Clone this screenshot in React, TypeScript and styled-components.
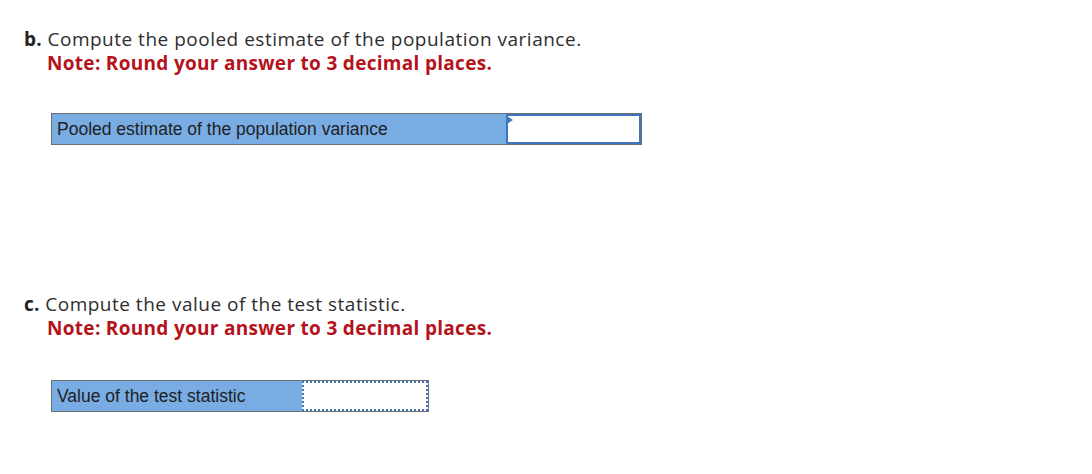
import styled, { createGlobalStyle } from "styled-components";

const GlobalStyle = createGlobalStyle`
  body {
    margin: 0;
    background: #ffffff;
    font-family: "Open Sans", Lato, sans-serif;
  }
`;

const Page = styled.main`
  padding: 27px 24px 0 24px;
`;

const Part = styled.section<{ $gap: number }>`
  margin-bottom: ${({ $gap }) => $gap}px;
`;

const Prompt = styled.p`
  margin: 0;
  font-size: 19px;
  line-height: 24px;
  letter-spacing: 0.5px;
  color: #2e2e2e;

  b {
    font-weight: 700;
    letter-spacing: 0.3px;
    color: #222;
  }
`;

const Note = styled.p`
  margin: 0 0 0 23px;
  font-size: 19px;
  line-height: 24px;
  letter-spacing: 0.3px;
  font-weight: 700;
  color: #b5121b;
`;

const AnswerTable = styled.div<{ $label: number; $input: number; $top: number }>`
  display: grid;
  grid-template-columns: ${({ $label }) => $label}px ${({ $input }) => $input}px;
  width: max-content;
  margin: ${({ $top }) => $top}px 0 0 27px;
  border: 1px solid #6f6f6f;
  font-family: "Liberation Sans", Arial, sans-serif;
`;

const LabelCell = styled.div`
  height: 30px;
  padding-left: 5px;
  display: flex;
  align-items: center;
  background: #78ace3;
  color: #1f1f1f;
  font-size: 17.5px;
`;

const InputCell = styled.div<{ $dotted?: boolean }>`
  position: relative;
  height: 30px;
  box-sizing: border-box;
  background: #ffffff;
  border: 2px ${({ $dotted }) => ($dotted ? "dotted" : "solid")} #3d76bd;
`;

const Marker = styled.span`
  position: absolute;
  left: -1px;
  top: 0;
  width: 0;
  height: 0;
  border-top: 4px solid transparent;
  border-bottom: 4px solid transparent;
  border-left: 6px solid #3d76bd;
`;

export default function App() {
  return (
    <>
      <GlobalStyle />
      <Page>
        <Part $gap={147}>
          <Prompt>
            <b>b.</b> Compute the pooled estimate of the population variance.
          </Prompt>
          <Note>Note: Round your answer to 3 decimal places.</Note>
          <AnswerTable $label={454} $input={135} $top={38}>
            <LabelCell>Pooled estimate of the population variance</LabelCell>
            <InputCell>
              <Marker />
            </InputCell>
          </AnswerTable>
        </Part>
        <Part $gap={0}>
          <Prompt>
            <b>c.</b> Compute the value of the test statistic.
          </Prompt>
          <Note>Note: Round your answer to 3 decimal places.</Note>
          <AnswerTable $label={250} $input={126} $top={40}>
            <LabelCell>Value of the test statistic</LabelCell>
            <InputCell $dotted />
          </AnswerTable>
        </Part>
      </Page>
    </>
  );
}
